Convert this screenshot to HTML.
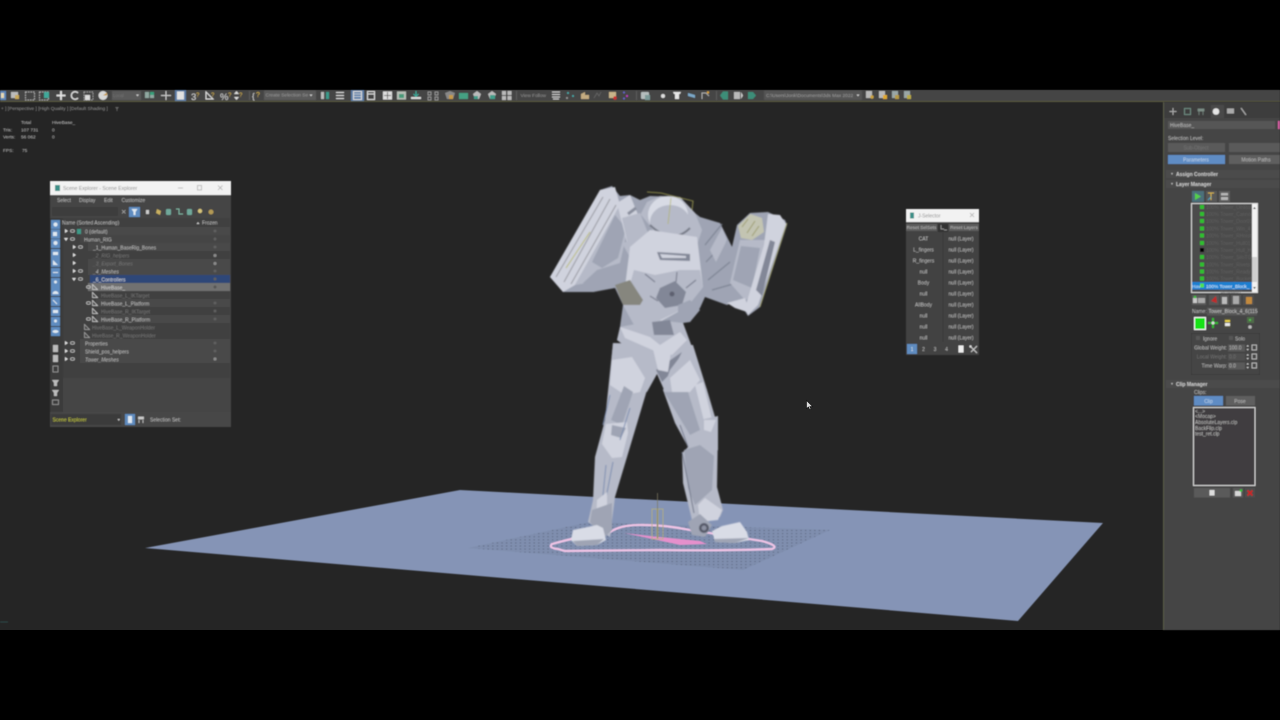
<!DOCTYPE html>
<html><head><meta charset="utf-8"><title>3ds Max</title>
<style>
html,body{margin:0;padding:0;background:#000;width:1280px;height:720px;overflow:hidden}
svg{display:block;position:absolute;left:0;top:0}
text{font-family:"Liberation Sans",sans-serif;font-size:5px;fill:#bdbdbd}
.d{fill:#7b7b7b}.b{font-weight:bold;fill:#cfcfcf}.k{fill:#747474}.w{fill:#d4d4d4}
.m{fill:#b6bac8}.n{fill:#9fa4b4}.o{fill:#828797}.l{fill:#d0d3de}.x{fill:#6e7280}
</style></head><body>
<svg width="1280" height="720" viewBox="0 0 1280 720" xmlns="http://www.w3.org/2000/svg">
<defs>
<filter id="s" x="-5%" y="-5%" width="110%" height="110%"><feGaussianBlur stdDeviation="0.45"/></filter>
<filter id="r" x="-5%" y="-5%" width="110%" height="110%"><feGaussianBlur stdDeviation="0.8"/></filter>
<filter id="p" x="-5%" y="-20%" width="110%" height="140%"><feGaussianBlur stdDeviation="0.6"/></filter>
<pattern id="dots" width="4.6" height="3.1" patternUnits="userSpaceOnUse"><rect width="1.2" height=".8" fill="#3f4658"/></pattern>
</defs>
<rect width="1280" height="720" fill="#000"/>
<rect y="90" width="1280" height="540" fill="#252525"/>
<g filter="url(#s)">
<!-- toolbar -->
<rect y="90" width="1280" height="11" fill="#454545"/>
<rect y="101" width="1280" height="1" fill="#5c5c3e"/>
<g>
<rect x="0" y="91" width="6" height="9" fill="#5d86b8"/><rect x="1" y="93" width="3" height="5" fill="#e8d9b0"/>
<rect x="11" y="92" width="7" height="6" fill="#bbb"/><rect x="15" y="95" width="4" height="4" fill="#c9a95a"/>
<rect x="25.5" y="92" width="9" height="8" fill="none" stroke="#aaa" stroke-width="1" stroke-dasharray="1.5 1"/>
<rect x="39.5" y="92" width="9" height="8" fill="none" stroke="#aaa" stroke-width="1" stroke-dasharray="1.5 1"/><rect x="44" y="92" width="5" height="6" fill="#3fa89a"/>
<path d="M61 91v9M56.5 95.500h9" stroke="#e5e5e5" stroke-width="1.800"/>
<path d="M78 93a3.800 3.800 0 1 0 0 5" fill="none" stroke="#ddd" stroke-width="1.400"/>
<rect x="84" y="92" width="9" height="8" fill="none" stroke="#999" stroke-dasharray="1.500 1"/><rect x="85" y="95" width="5" height="5" fill="#ddd"/>
<circle cx="103" cy="95.500" r="4.500" fill="#d8d8d8"/><path d="M103 95.500l4-3v3z" fill="#c79a4a"/>
<rect x="112" y="91" width="29" height="9" fill="#5a5a5a"/><text x="113" y="97" class="k" style="font-size:4.5px">Local</text><path d="M136 94.500h3l-1.500 2z" fill="#ccc"/>
<path d="M145 92h4v6h-4zM150 92h4v6h-4z" fill="#8fa7a0"/><rect x="150" y="92" width="4" height="3" fill="#39a07c"/>
<path d="M166 91v9M161 95.500h10" stroke="#ccc" stroke-width="1"/>
<rect x="175" y="90" width="11" height="11" fill="#5b7ea8"/><rect x="177" y="91.500" width="7" height="8" fill="#e2e2e2"/>
<text x="191" y="100" class="w" style="font-size:9.500px">3</text><text x="196" y="97" style="font-size:6px;fill:#d9b64d">?</text>
<path d="M206 92v7h7z" fill="none" stroke="#ddd" stroke-width="1"/><text x="211" y="97" style="font-size:6px;fill:#d9b64d">?</text>
<text x="220" y="100" class="w" style="font-size:9.500px">%</text><text x="228" y="97" style="font-size:6px;fill:#d9b64d">?</text>
<path d="M234 94l2.500-3 2.500 3zM234 97l2.500 3 2.500-3z" fill="#ddd"/><text x="239" y="97" style="font-size:6px;fill:#d9b64d">?</text>
<rect x="249" y="91" width="1" height="9" fill="#5c5c5c"/>
<text x="252" y="99" class="w" style="font-size:8px">{</text><text x="256" y="97" style="font-size:7px;fill:#d9b64d">?</text>
<rect x="264" y="90.500" width="52" height="9.500" fill="#5a5a5a"/><text x="265.500" y="96.500" class="d" style="font-size:4.800px;fill:#999">Create Selection Se</text><path d="M309.500 94.500h3l-1.500 2z" fill="#ccc"/>
<path d="M321 92h3v7h-3z" fill="#bbb"/><path d="M326 92h3v7h-3z" fill="#3a9a8a"/>
<path d="M336 92h8v1h-8zM336 95h8v1h-8zM336 98h8v1h-8z" fill="#ddd"/>
<rect x="351" y="90" width="13" height="11" fill="#5b7ea8"/><rect x="353.500" y="91.500" width="8" height="8" fill="none" stroke="#ddd"/><path d="M354 94h7M354 96.500h7" stroke="#ddd" stroke-width=".7"/>
<rect x="367.500" y="91.500" width="7" height="8" fill="none" stroke="#ddd"/><path d="M368 94h6" stroke="#ddd"/>
<rect x="383" y="91.500" width="9" height="8" fill="#ddd"/><path d="M387.500 92v7M384 95.500h7" stroke="#555" stroke-width=".8"/>
<rect x="397" y="91.500" width="9" height="8" fill="#b6bdb6"/><rect x="399" y="94" width="5" height="4" fill="#4a9a7a"/>
<path d="M411 97h10v2h-10z" fill="#ddd"/><path d="M416 91v5M413.500 94l2.500 2.500 2.500-2.500" stroke="#3bb0a0" fill="none"/>
<path d="M428 92h3v3h-3zM435 92h3v3h-3zM428 97h3v3h-3zM435 97h3v3h-3z" fill="none" stroke="#aaa" stroke-width=".7"/>
<path d="M445 93l5-2 5 2-2 6h-6z" fill="#888"/><rect x="449" y="95" width="4" height="4" fill="#c59a48"/>
<path d="M459 93h9v6h-9z" fill="#44a083"/>
<path d="M473 94l4-3 4 3-2 5h-4z" fill="#bbb"/><rect x="474" y="96" width="4" height="3" fill="#3f9e8a"/>
<path d="M488 94l4-3 4 3-2 5h-4z" fill="#bbb"/><rect x="490" y="95" width="5" height="4" fill="#3f9e8a"/>
<path d="M502 91h4v4h-4zM507.500 91h4v4h-4zM502 96h4v4h-4zM507.500 96h4v4h-4z" fill="#b9b9b9"/>
<rect x="516" y="91" width="1" height="9" fill="#5c5c5c"/>
<text x="520.500" y="97" class="d" style="font-size:4.800px;fill:#8f8f8f">View Follow</text>
<path d="M552 92h8M552 94.500h8M552 97h8M553 99h6" stroke="#ccc" stroke-width="1"/>
<circle cx="568" cy="93" r="1" fill="#4aa"/><circle cx="573" cy="96" r="1" fill="#4aa"/><circle cx="567" cy="98" r="1" fill="#999"/>
<path d="M581 94l4-2v7h-4zM585 95h4v4h-4z" fill="#c4ab80"/>
<path d="M594 98l3-5 2 3 2-4" fill="none" stroke="#666" stroke-width=".8"/>
<rect x="609" y="92" width="7" height="6" fill="#c9b48a"/><circle cx="615" cy="98" r="1.700" fill="#c33"/>
<circle cx="624" cy="92.500" r="1" fill="#66c"/><circle cx="627" cy="96" r="1" fill="#c3c"/><circle cx="624" cy="98.500" r="1" fill="#66c"/>
<rect x="636" y="91" width="1" height="9" fill="#5c5c5c"/>
<rect x="641" y="92" width="8" height="7" rx="1" fill="#b4bcbc"/><rect x="645" y="95" width="5" height="5" fill="#7b9a98"/>
<circle cx="663" cy="96" r="2" fill="#ddd"/>
<path d="M673 92h8l-1 2h-1v5h-4v-5h-1z" fill="#e5e5e5"/>
<path d="M688 93l7 2v3l-7-2z" fill="#7ba7c7"/>
<path d="M702 99v-6h4l3 3" fill="none" stroke="#aaa"/><circle cx="708" cy="92.500" r="1.200" fill="#d9a33a"/>
<rect x="716" y="91" width="1" height="9" fill="#5c5c5c"/>
<path d="M720 95.500l3-4h5v8h-5z" fill="#3e8d78"/>
<rect x="734" y="92" width="6" height="7" fill="#b9b9b9"/><path d="M741 92v7l2-3.500z" fill="#ccc"/>
<path d="M748 92h5l3 3.500-3 3.500h-5z" fill="#3e8d78"/>
<rect x="764" y="90.500" width="98" height="9.500" fill="#555"/><text x="766" y="96.800" style="font-size:4.800px;fill:#9c9c9c">C:\Users\Jonk\Documents\3ds Max 2022</text><path d="M856.500 94.500h3l-1.500 2z" fill="#ccc"/>
<rect x="866" y="91" width="6" height="7" fill="#b8b8b8"/><circle cx="872" cy="97" r="1.700" fill="#c9a23f"/>
<rect x="879" y="91" width="6" height="7" fill="#b8b8b8"/><rect x="883" y="95" width="4" height="4" fill="#e0a92e"/>
<rect x="892" y="91" width="6" height="7" fill="#9aa6a6"/><rect x="895" y="95" width="4" height="4" fill="#b59a45"/>
<rect x="904" y="91" width="6" height="7" fill="#9aa6a6"/><rect x="907" y="95" width="4" height="4" fill="#b8a944"/>
</g>
<!-- viewport label and stats -->
<text x="1" y="110" style="font-size:4.800px;fill:#9d9d9d">+ ] [Perspective ] [High Quality ] [Default Shading ]</text>
<path d="M115 107h4l-1.500 2v2h-1v-2z" fill="#666"/>
<text x="21" y="124" class="w" style="font-size:4.800px">Total</text><text x="52" y="124" class="w" style="font-size:4.800px">HiveBase_</text>
<text x="3" y="131.500" class="w" style="font-size:4.800px">Tris:</text><text x="21" y="131.500" class="w" style="font-size:4.800px">107 731</text><text x="52" y="131.500" class="w" style="font-size:4.800px">0</text>
<text x="3" y="138.500" class="w" style="font-size:4.800px">Verts:</text><text x="21" y="138.500" class="w" style="font-size:4.800px">56 062</text><text x="52" y="138.500" class="w" style="font-size:4.800px">0</text>
<text x="3" y="152" class="w" style="font-size:4.800px">FPS:</text><text x="22" y="152" class="w" style="font-size:4.800px">75</text>
</g>
<!-- floor -->
<g filter="url(#s)">
<polygon points="145,548 460,490 1103,523 1018,621" fill="#8594b6"/>
<polygon points="468,548 590,522 830,530 743,570" fill="#6f7c98" opacity=".25"/>
<polygon points="468,548 590,522 830,530 743,570" fill="url(#dots)" opacity=".7"/>
</g>
<g filter="url(#p)">
<path d="M558 549 Q548 548 552 544 Q580 536 610 532 Q622 524 645 525 Q665 525 690 530 L762 541 Q780 546 772 549 Q720 551 660 550 L565 551Z" fill="none" stroke="#eec3e4" stroke-width="2.400"/>
<path d="M624 533L650 536L700 541L707 544L680 545Z" fill="#e690cc"/>
<path d="M652 509h5v30h-5zM658 509h5v30h-5z" fill="none" stroke="#b7b27f" stroke-width="1" opacity=".8"/>
<path d="M657.500 493v45" stroke="#7c7a60" stroke-width=".7"/>
</g>
<!-- character -->
<g filter="url(#r)">
<!-- silhouette underlay -->
<polygon class="n" points="550,277 600,190 612,186 620,196 630,195 640,200 650,196 680,197 695,213 705,221 720,223 732,247 737,225 750,213 768,212 785,220 787,225 760,307 748,316 738,300 727,305 705,297 700,308 690,322 683,323 693,350 660,372 640,357 617,340 620,327 623,305 615,288 593,292 563,292"/>
<polygon class="m" points="613,343 693,345 707,390 665,392 657,374 647,392 609,388"/>
<!-- left shield -->
<polygon class="l" points="550,277 600,190 615,187 620,205 575,285 563,292"/>
<polygon class="m" points="575,285 620,205 628,227 620,263 587,283"/>
<polygon class="n" points="592,262 615,215 626,228 618,258 602,268"/>
<path d="M556 277L603 197M564 282L610 199M571 284L616 205" stroke="#95969e" stroke-width="1"/>
<path d="M566 268L590 232" stroke="#b5b552" stroke-width=".8"/>
<polygon class="n" points="583,283 597,270 620,263 633,267 617,287 593,292"/>
<!-- right arm -->
<polygon class="n" points="700,217 720,223 732,247 733,283 727,303 703,293 702,260"/>
<path d="M705 245L722 224M706 262L727 240M708 280L730 262M712 290L733 284" stroke="#7e8494" stroke-width="1.200"/>
<polygon class="m" points="710,250 722,228 727,240 716,262"/>
<!-- right forearm and shield -->
<polygon class="m" points="730,283 740,240 766,240 757,295 745,300"/>
<polygon class="n" points="733,280 741,246 760,248 752,288"/>
<polygon class="l" points="768,214 780,215 786,224 758,305 748,315 745,308 764,245"/>
<polygon class="o" points="756,290 770,240 775,242 762,296"/>
<polygon points="738,226 750,214 762,218 764,232 752,240 741,238" fill="#c3c4b2"/>
<path d="M742 227l6-8M747 233l8-12M752 236l7-10" stroke="#9c9c6c" stroke-width="1"/>
<path d="M787 223L760 307" stroke="#a6a560" stroke-width=".8"/>
<polygon class="l" points="727,303 745,298 750,313 735,308"/>
<!-- helmet hood -->
<polygon class="m" points="647,202 660,196 680,197 695,213 702,230 697,245 650,240 635,225"/>
<path d="M647 192L661 193L693 201L692 210" fill="none" stroke="#a8a654" stroke-width=".8"/>
<polygon class="n" points="637,210 660,238 655,245 630,225"/>
<ellipse cx="668" cy="215" rx="20" ry="19" fill="#d8dbe5"/>
<ellipse cx="670" cy="222" rx="20" ry="17" class="m"/>
<path d="M650 225Q672 246 690 228" fill="none" stroke="#777b88" stroke-width="2"/>
<path d="M671 198L668 224" stroke="#b2b25a" stroke-width=".7"/>
<!-- left shoulder -->
<polygon class="l" points="617,203 630,195 647,237 627,243"/>
<polygon class="m" points="622,218 640,213 650,238 628,245"/>
<path d="M636 208l-8 6" stroke="#8a8f9e" stroke-width="3"/>
<polygon class="m" points="622,243 634,240 645,263 636,268"/>
<!-- torso -->
<polygon class="l" points="630,247 650,230 697,237 703,287 687,307 650,327 623,303"/>
<polygon class="m" points="634,270 655,275 680,270 700,270 703,287 687,307 650,325 625,302"/>
<polygon class="o" points="657,252 690,254 690,261 660,260"/>
<polygon class="l" points="660,254 686,256 686,258 662,258"/>
<polygon class="o" points="660,288 675,281 686,292 682,305 665,308 656,298"/>
<circle cx="672" cy="294" r="2.500" fill="#5d6170"/>
<path d="M677 272l-1 10M655 282l-10-8M650 296l8 5M686 288l10-8" stroke="#7c8090" stroke-width="1.200"/>
<polygon points="615,285 630,280 643,300 640,305 623,305" fill="#86867e"/>
<polygon class="m" points="623,305 640,305 653,318 650,330 634,325"/>
<polygon class="n" points="678,305 690,300 700,310 690,322 678,320"/>
<!-- waist -->
<polygon class="m" points="617,340 620,327 657,320 683,323 693,350 680,362 660,372 640,357"/>
<polygon class="o" points="652,322 670,320 674,335 654,335"/>
<polygon class="l" points="620,327 650,337 660,345 657,352 625,338"/>
<polygon class="l" points="660,345 680,332 687,340 672,355 662,352"/>
<polygon class="o" points="656,370 682,352 672,372 662,382"/>
<polygon class="l" points="652,345 672,345 668,372 658,370"/>
<!-- left leg -->
<polygon class="m" points="613,343 605,420 595,457 593,500 588,522 610,537 615,497 627,457 647,390 648,367 638,357"/>
<polygon class="l" points="612,360 632,357 645,378 640,392 625,395 610,385"/>
<polygon class="n" points="624,386 633,392 622,425 611,420"/>
<polygon class="l" points="606,424 627,422 628,433 622,457 612,458 602,444"/>
<polygon class="n" points="612,425 626,428 621,438 611,435"/>
<path d="M610 395L603 425M630 408L620 440M606 465L602 505M613 462L606 498" stroke="#7b8db0" stroke-width="1"/>
<polygon class="l" points="597,500 607,492 607,515 596,522"/>
<polygon class="n" points="592,510 612,503 612,530 604,538 590,522"/>
<!-- right leg -->
<polygon class="m" points="663,390 675,423 688,447 682,453 683,483 692,520 720,517 723,510 717,487 718,427 707,390 693,357 683,353 670,370"/>
<polygon class="l" points="670,378 690,360 700,380 690,392 672,392"/>
<polygon class="n" points="664,392 688,392 700,430 690,435"/>
<polygon class="l" points="695,385 703,382 712,420 705,425"/>
<polygon class="m" points="700,420 718,416 718,450 712,456 700,440"/>
<polygon class="l" points="704,420 716,420 711,432 704,430"/>
<polygon class="n" points="684,450 700,445 714,456 712,490 695,505 688,488"/>
<path d="M682 452L694 513M680 425L688 447" stroke="#6e7587" stroke-width="1"/>
<polygon class="l" points="698,505 705,498 722,510 718,520 700,522"/>
<polygon class="n" points="688,522 700,514 712,525 705,537 692,535"/>
<!-- feet -->
<polygon points="573,530 597,525 603,528 606,540 597,545 577,546 571,540" fill="#d9dce6"/>
<polygon class="n" points="573,541 604,539 597,545 577,546"/>
<polygon points="712,531 722,526 740,522 747,532 749,540 735,543 715,542" fill="#d9dce6"/>
<polygon class="n" points="714,539 749,538 735,543 715,542"/>
<circle cx="704" cy="528" r="5" fill="#555968"/><circle cx="704" cy="528" r="2.500" fill="#8d92a3"/>
</g>
<!-- cursor -->
<path d="M806.500 400.500v8l2-1.500 1.200 2.800 1.300-.6-1.200-2.700 2.700-.1z" fill="#ddd" stroke="#111" stroke-width=".6"/>

<g filter="url(#s)">
<!-- Scene Explorer -->
<rect x="50" y="181" width="181" height="246" fill="#444"/>
<rect x="50" y="181" width="181" height="14" fill="#f2f2f2"/>
<rect x="55" y="185" width="5" height="6" fill="#3c8f88"/>
<text x="63" y="190" style="fill:#8f8f8f;font-size:5.100px">Scene Explorer - Scene Explorer</text>
<path d="M178 188h5" stroke="#aaa" stroke-width=".7"/><rect x="197.500" y="185.500" width="4" height="4.500" fill="none" stroke="#aaa" stroke-width=".7"/><path d="M218 185.500l4.500 4.500m0-4.500l-4.500 4.500" stroke="#aaa" stroke-width=".7"/>
<text x="57" y="202">Select</text><text x="79" y="202">Display</text><text x="104" y="202">Edit</text><text x="121.500" y="202">Customize</text>
<rect x="52" y="207" width="66" height="9" fill="#3c3c3c"/>
<path d="M122 210l3.500 3.500m0-3.500l-3.500 3.500" stroke="#aaa" stroke-width=".7"/>
<rect x="129" y="207" width="11" height="10" fill="#5f8cc0"/><path d="M131.500 209h6l-2 3v3h-2v-3z" fill="#dfe8f0"/>
<rect x="146" y="210" width="3" height="4" fill="#ccc"/><path d="M157 209l4 2-1 4-4-2z" fill="#c9b060"/>
<rect x="166" y="209" width="5" height="6" rx="1" fill="#6fa79a"/><path d="M176 209h3v5h4" fill="none" stroke="#7fb3a0"/>
<rect x="187" y="209" width="5" height="6" rx="1" fill="#6fa79a"/><circle cx="200" cy="211" r="2.200" fill="#d6c37a"/><circle cx="211" cy="212" r="2.500" fill="#b39a55"/>
<!-- left column -->
<rect x="50" y="218" width="13" height="208" fill="#3b3b3b"/>
<rect x="63" y="218" width="167" height="160" fill="#414141"/>
<g fill="#5f8cc0"><rect x="51" y="220" width="9" height="9"/><rect x="51" y="229.500" width="9" height="9"/><rect x="51" y="239" width="9" height="9"/><rect x="51" y="249" width="9" height="9"/><rect x="51" y="258" width="9" height="9"/><rect x="51" y="268" width="9" height="9"/><rect x="51" y="278" width="9" height="9"/><rect x="51" y="287" width="9" height="9"/><rect x="51" y="297" width="9" height="9"/><rect x="51" y="307" width="9" height="9"/><rect x="51" y="317" width="9" height="9"/><rect x="51" y="327" width="9" height="9"/></g>
<g fill="#dfe8f0"><circle cx="55.500" cy="224.500" r="2"/><rect x="53" y="232" width="4" height="4"/><circle cx="55.500" cy="243" r="2"/><rect x="53" y="252" width="5" height="3"/><path d="M53 265v-5l5 5z"/><rect x="53" y="272" width="5" height="1"/><circle cx="55.500" cy="282" r="1.500"/><path d="M52.500 294a3 3 0 0 1 6 0z"/><path d="M53 300l4 4" stroke="#dfe8f0"/><rect x="53" y="310" width="5" height="3"/><circle cx="55.500" cy="321" r="1.500"/><ellipse cx="55.500" cy="331.500" rx="3" ry="1.500"/></g>
<g fill="#bbb"><rect x="53" y="345" width="5" height="7"/><rect x="53" y="355" width="5" height="7"/><rect x="53" y="366" width="5" height="6" fill="none" stroke="#aaa" stroke-width=".7"/><path d="M52 380h7l-2 3v3h-3v-3z"/><path d="M52 390h7l-2 3v3h-3v-3z"/><rect x="52.500" y="400" width="6" height="4.500" fill="none" stroke="#aaa" stroke-width=".7"/></g>
<!-- header -->
<rect x="63" y="218" width="167" height="8" fill="#3f3f3f"/>
<text x="62" y="224.500">Name (Sorted Ascending)</text><path d="M196.500 224l1.500-2 1.500 2z" fill="#ccc"/><text x="202" y="224.500">Frozen</text>
<!-- rows -->
<rect x="80" y="227" width="150" height="8" fill="#4a4a4a"/>
<rect x="80" y="235" width="150" height="8" fill="#454545"/>
<rect x="88" y="243" width="142" height="8" fill="#4a4a4a"/>
<rect x="88" y="259" width="142" height="8" fill="#4a4a4a"/>
<rect x="88" y="267" width="142" height="8" fill="#4a4a4a"/>
<rect x="90" y="275" width="140" height="8" fill="#2f4678"/>
<rect x="88" y="283" width="142" height="8" fill="#717171"/>
<rect x="96" y="299" width="134" height="8" fill="#4a4a4a"/>
<rect x="96" y="315" width="134" height="8" fill="#4a4a4a"/>
<rect x="80" y="339" width="150" height="24" fill="#484848"/>
<g fill="#ddd">
<path d="M65 229l3 2-3 2zM65 341l3 2-3 2zM65 349l3 2-3 2zM65 357l3 2-3 2zM73 245l3 2-3 2zM73 253l3 2-3 2zM73 261l3 2-3 2zM73 269l3 2-3 2zM64 238l4 0-2 3zM72 278l4 0-2 3z"/>
</g>
<g fill="none" stroke="#cfcfcf" stroke-width=".7">
<ellipse cx="72.500" cy="231" rx="2" ry="1.300"/><ellipse cx="72.500" cy="239" rx="2" ry="1.300"/><ellipse cx="80.500" cy="247" rx="2" ry="1.300"/><ellipse cx="80.500" cy="271" rx="2" ry="1.300"/><ellipse cx="80.500" cy="279" rx="2" ry="1.300"/><ellipse cx="88.500" cy="287" rx="2" ry="1.300"/><ellipse cx="88.500" cy="303" rx="2" ry="1.300"/><ellipse cx="88.500" cy="319" rx="2" ry="1.300"/><ellipse cx="72.500" cy="343" rx="2" ry="1.300"/><ellipse cx="72.500" cy="351" rx="2" ry="1.300"/><ellipse cx="72.500" cy="359" rx="2" ry="1.300"/>
</g>
<rect x="77" y="229" width="4" height="5" fill="#3c9a88"/>
<g fill="none" stroke="#d5d5d5" stroke-width=".7"><path d="M92.500 284.500v5h5zM92.500 300.500v5h5zM92.500 316.500v5h5zM92.500 292.500v5h5zM92.500 308.500v5h5z"/><path d="M84.500 324.500v5h5zM84.500 332.500v5h5z" opacity=".7"/></g>
<text x="85" y="233.500">0 (default)</text>
<text x="84" y="241.500">Human_RIG</text>
<text x="93" y="249.500">_1_Human_BaseRig_Bones</text>
<text x="93" y="257.500" class="k" font-style="italic">_2_RIG_helpers</text>
<text x="93" y="265.500" class="k" font-style="italic">_3_Export_Bones</text>
<text x="93" y="273.500" font-style="italic">_4_Meshes</text>
<text x="93" y="281.500" style="fill:#e0e0e0">_6_Controllers</text>
<text x="101" y="289.500" class="w">HiveBase_</text>
<text x="101" y="297.500" class="k">HiveBase_L_IKTarget</text>
<text x="101" y="305.500">HiveBase_L_Platform</text>
<text x="101" y="313.500" class="k">HiveBase_R_IKTarget</text>
<text x="101" y="321.500">HiveBase_R_Platform</text>
<text x="92" y="329.500" class="k">HiveBase_L_WeaponHolder</text>
<text x="92" y="337.500" class="k">HiveBase_R_WeaponHolder</text>
<text x="85" y="345.500">Properties</text>
<text x="85" y="353.500">Shield_pos_helpers</text>
<text x="85" y="361.500" font-style="italic">Tower_Meshes</text>
<g fill="#5f5f5f"><circle cx="215" cy="231" r="1.500"/><circle cx="215" cy="239" r="1.500"/><circle cx="215" cy="247" r="1.500"/><circle cx="215" cy="255.500" r="1.600" fill="#8a8a8a"/><circle cx="215" cy="263.500" r="1.600" fill="#8a8a8a"/><circle cx="215" cy="271" r="1.500"/><circle cx="215" cy="279" r="1.500"/><circle cx="215" cy="287" r="1.500" fill="#555"/><circle cx="215" cy="303" r="1.500"/><circle cx="215" cy="311" r="1.500"/><circle cx="215" cy="319" r="1.500"/><circle cx="215" cy="343" r="1.500"/><circle cx="215" cy="351" r="1.500"/><circle cx="215" cy="359" r="1.600" fill="#8a8a8a"/></g>
<!-- bottom -->
<rect x="50" y="412" width="181" height="15" fill="#474747"/>
<rect x="51" y="414" width="70" height="11" fill="#3b3b3b"/>
<text x="52.500" y="421.500" style="fill:#c6c93a">Scene Explorer</text>
<path d="M117.500 419h2.500l-1.250 2z" fill="#ccc"/>
<rect x="125" y="414" width="10" height="11" fill="#5f8cc0"/><rect x="128" y="416" width="4" height="7" fill="#dfe8f0"/>
<path d="M138.500 417h5v2h-5zM139 420v3M143 420v3" stroke="#ccc" stroke-width=".8" fill="#ccc"/>
<text x="150" y="421.500">Selection Set:</text>
<!-- J-Selector -->
<rect x="906" y="209" width="73" height="146" fill="#434343"/>
<rect x="906" y="209" width="73" height="13" fill="#f2f2f2"/>
<rect x="910" y="212.500" width="4" height="6" fill="#3c8f88"/>
<text x="918" y="217.500" style="fill:#8f8f8f">J-Selector</text>
<path d="M970 213l4 4m0-4l-4 4" stroke="#aaa" stroke-width=".7"/>
<rect x="906" y="224" width="31" height="7" fill="#5b5b5b"/><rect x="949" y="224" width="30" height="7" fill="#5b5b5b"/><rect x="938" y="224" width="10" height="8" fill="#333"/>
<text x="921.500" y="229" text-anchor="middle" style="font-size:4.700px">Reset SelSets</text><text x="964" y="229" text-anchor="middle" style="font-size:4.700px">Reset Layers</text>
<path d="M941 225v4h3M944 230h3" stroke="#aaa" stroke-width=".7" fill="none"/>
<path d="M943 232v110" stroke="#383838" stroke-width=".7"/>
<g style="font-size:4.800px">
<text x="923.500" y="240.500" text-anchor="middle">CAT</text><text x="923.500" y="251.500" text-anchor="middle">L_fingers</text><text x="923.500" y="262.500" text-anchor="middle">R_fingers</text><text x="923.500" y="273.500" text-anchor="middle">null</text><text x="923.500" y="284.500" text-anchor="middle">Body</text><text x="923.500" y="295.500" text-anchor="middle">null</text><text x="923.500" y="306.500" text-anchor="middle">AllBody</text><text x="923.500" y="317.500" text-anchor="middle">null</text><text x="923.500" y="328.500" text-anchor="middle">null</text><text x="923.500" y="339.500" text-anchor="middle">null</text>
<text x="961" y="240.500" text-anchor="middle">null (Layer)</text><text x="961" y="251.500" text-anchor="middle">null (Layer)</text><text x="961" y="262.500" text-anchor="middle">null (Layer)</text><text x="961" y="273.500" text-anchor="middle">null (Layer)</text><text x="961" y="284.500" text-anchor="middle">null (Layer)</text><text x="961" y="295.500" text-anchor="middle">null (Layer)</text><text x="961" y="306.500" text-anchor="middle">null (Layer)</text><text x="961" y="317.500" text-anchor="middle">null (Layer)</text><text x="961" y="328.500" text-anchor="middle">null (Layer)</text><text x="961" y="339.500" text-anchor="middle">null (Layer)</text>
</g>
<rect x="907" y="344" width="10" height="10" fill="#5f8cc0"/>
<text x="912" y="351" text-anchor="middle" style="fill:#dfe8f0">1</text><text x="923.500" y="351" text-anchor="middle">2</text><text x="935" y="351" text-anchor="middle">3</text><text x="946.500" y="351" text-anchor="middle">4</text>
<rect x="958.500" y="345.500" width="5" height="7" fill="#eee"/>
<path d="M970 346l7 7M977 346l-6 6" stroke="#ccc" stroke-width="1"/><circle cx="970.500" cy="346.500" r="1.200" fill="#ddd"/>
<!-- Right panel -->
<rect x="1163" y="102" width="1" height="528" fill="#5c5f4a"/>
<rect x="1164" y="102" width="116" height="528" fill="#454545"/>
<rect x="1164" y="102" width="116" height="16" fill="#3d3d3d"/>
<rect x="1211" y="105" width="13" height="13" fill="#4a4a4a"/>
<path d="M1173 108v7M1169.500 111.500h7" stroke="#aaa"/><rect x="1184.500" y="108.500" width="6" height="6" fill="none" stroke="#6d8a80"/><path d="M1198 109h6v2h-6zM1199 111v4M1203 111v4" fill="#7d8f86" stroke="#7d8f86" stroke-width=".7"/>
<circle cx="1216" cy="111.500" r="3.300" fill="#e5e5e5"/><rect x="1227" y="108.500" width="7" height="5" fill="#aaa"/><path d="M1241 108l5 7" stroke="#aaa" stroke-width="1.200"/>
<rect x="1168" y="121" width="107" height="8" fill="#575757"/><text x="1170" y="127">HiveBase_</text><rect x="1278" y="121" width="2" height="8" fill="#d75fa5"/>
<text x="1168" y="140">Selection Level:</text>
<rect x="1168" y="143" width="57" height="9" fill="#5a5a5a"/><rect x="1229" y="143" width="51" height="9" fill="#5a5a5a"/><text x="1196" y="149.500" text-anchor="middle" class="k">Sub-Object</text>
<rect x="1168" y="155" width="57" height="9" fill="#5e8cc4"/><rect x="1229" y="155" width="51" height="9" fill="#5f5f5f"/><text x="1196" y="161.500" text-anchor="middle" style="fill:#c5d6ea">Parameters</text><text x="1256" y="161.500" text-anchor="middle">Motion Paths</text>
<rect x="1166" y="170" width="114" height="8" fill="#4c4c4c"/><text x="1176" y="175.800" class="b">Assign Controller</text><path d="M1171 173h2l-1 2z" fill="#bbb"/>
<rect x="1166" y="180" width="114" height="8" fill="#4c4c4c"/><text x="1176" y="185.800" class="b">Layer Manager</text><path d="M1171 183h2l-1 2z" fill="#bbb"/>
<rect x="1192" y="191" width="12" height="11" fill="#4b6f7a"/><path d="M1195 193l6 3.500-6 3.500z" fill="#55d04a"/>
<rect x="1206" y="191" width="11" height="11" fill="#585858"/><path d="M1208 193h6M1211 193v7" stroke="#d3b14b"/><path d="M1208 200l3-3" stroke="#4aa5c5"/>
<rect x="1219" y="191" width="11" height="11" fill="#5d5d5d"/><rect x="1221" y="193" width="7" height="7" fill="#b5b5b5"/><rect x="1221" y="195.500" width="7" height="1.500" fill="#555"/>
<!-- layer list -->
<rect x="1191" y="203" width="67" height="90" fill="#d8d8d8"/>
<rect x="1192" y="204" width="60" height="88" fill="#4b4b4b"/>
<g fill="#2fbf2f"><rect x="1200" y="205" width="4" height="4"/><rect x="1200" y="212" width="4" height="4"/><rect x="1200" y="219" width="4" height="4"/><rect x="1200" y="226.500" width="4" height="4"/><rect x="1200" y="233.500" width="4" height="4"/><rect x="1200" y="241" width="4" height="4"/><rect x="1200" y="248" width="4" height="4" fill="#000"/><rect x="1200" y="255" width="4" height="4"/><rect x="1200" y="262.500" width="4" height="4"/><rect x="1200" y="269.500" width="4" height="4"/><rect x="1200" y="276.500" width="4" height="4"/></g>
<g style="font-size:4.800px">
<text x="1206" y="209" style="fill:#5f5f5f">100% Tower_Uiniiss</text><text x="1206" y="216" style="fill:#5f5f5f">100% Tower_Cannon</text><text x="1206" y="223" style="fill:#5f5f5f">100% Tower_Door01</text><text x="1206" y="230.500" style="fill:#5f5f5f">100% Tower_Win_4</text><text x="1206" y="237.500" style="fill:#5f5f5f">100% Tower_RHoist</text><text x="1206" y="245" style="fill:#5f5f5f">100% Tower_Hull01</text><text x="1206" y="252" style="fill:#5f5f5f">100% Tower_Hull_H</text><text x="1206" y="259" style="fill:#5f5f5f">100% Tower_SiloTG</text><text x="1206" y="266.500" style="fill:#5f5f5f">100% Tower_Rivets</text><text x="1206" y="273.500" style="fill:#5f5f5f">100% Tower_Ready</text><text x="1206" y="280.500" style="fill:#5f5f5f">100% Tower_Bucket</text>
</g>
<rect x="1192" y="282" width="60" height="7.500" fill="#1a7fd0"/>
<rect x="1200" y="283.500" width="4" height="4" fill="#4fe04f"/>
<text x="1192" y="288" style="fill:#cfe8ff;font-size:4.800px">Hav</text><text x="1206" y="288" style="fill:#eaf5ff;font-size:4.800px">100% Tower_Block_</text>
<text x="1219" y="293" style="fill:#6a6a6a;font-size:4.300px">"Simulation"</text>
<rect x="1252" y="204" width="5" height="88" fill="#f2f2f2"/><rect x="1252" y="257" width="5" height="25" fill="#cfcfcf"/>
<path d="M1253 209l1.500-2 1.500 2zM1253 287l1.500 2 1.500-2z" fill="#444"/>
<!-- icon row -->
<rect x="1192" y="295" width="14" height="10" fill="#5a5a5a"/><rect x="1193" y="298" width="4" height="5" fill="#c9c9c9"/><circle cx="1195" cy="297" r="1.300" fill="#3fbf3f"/><rect x="1198" y="298" width="7" height="5" fill="#aaa"/>
<rect x="1209" y="295" width="10" height="10" fill="#575757"/><path d="M1211 301l5-5 1 7z" fill="#c02a2a"/>
<rect x="1220" y="295" width="9" height="10" fill="#595959"/><rect x="1222" y="297" width="5" height="7" fill="#bbb"/>
<rect x="1231" y="295" width="10" height="10" fill="#595959"/><rect x="1233" y="296" width="6" height="8" fill="#aaa"/>
<rect x="1243" y="295" width="11" height="10" fill="#4f4f4f"/><rect x="1246" y="297" width="6" height="7" fill="#c28a3c"/>
<text x="1192" y="313">Name:</text><rect x="1207" y="307.500" width="50" height="8" fill="#565656"/><text x="1208.500" y="313" style="fill:#cbcbcb">Tower_Block_4_6(115</text>
<rect x="1194" y="317" width="12" height="13" fill="#fff"/><rect x="1195" y="318" width="10" height="11" fill="#14e214"/>
<path d="M1213 318v10M1208 323h10" stroke="#2fb82f" stroke-width="2"/><circle cx="1213" cy="323" r="1.500" fill="#ddd"/>
<rect x="1224" y="318" width="7" height="10" fill="#514f3f"/><rect x="1225" y="320" width="5" height="2" fill="#e9d34a"/><rect x="1225" y="323" width="5" height="3" fill="#e9e9e9"/>
<rect x="1247" y="317" width="7" height="6" fill="#4f6b4a"/><circle cx="1250" cy="320" r="1" fill="#4fd04f"/><circle cx="1250" cy="327" r="1.800" fill="#bbb"/>
<rect x="1191.500" y="333.500" width="68" height="41" fill="none" stroke="#3b3b3b"/>
<rect x="1196" y="336" width="4" height="4" fill="#565656"/><text x="1203" y="340.500">Ignore</text><rect x="1229" y="336" width="4" height="4" fill="#565656"/><text x="1235" y="340.500">Solo</text>
<text x="1227" y="349.500" text-anchor="end">Global Weight:</text><rect x="1228" y="344.500" width="17" height="7" fill="#5a5a5a"/><text x="1229" y="349.500">100.0</text>
<text x="1227" y="358.500" text-anchor="end" class="k">Local Weight:</text><rect x="1228" y="353.500" width="17" height="7" fill="#4f4f4f"/><text x="1229" y="358.500" class="k">0.0</text>
<text x="1227" y="367.500" text-anchor="end">Time Warp:</text><rect x="1228" y="362.500" width="17" height="7" fill="#5a5a5a"/><text x="1229" y="367.500">0.0</text>
<path d="M1246.500 346.500l1.200-1.500 1.200 1.500zM1246.500 349l1.200 1.500 1.200-1.500zM1246.500 355.500l1.200-1.500 1.200 1.500zM1246.500 358l1.200 1.500 1.200-1.500zM1246.500 364.500l1.200-1.500 1.200 1.500zM1246.500 367l1.200 1.500 1.200-1.500z" fill="#ddd"/>
<g fill="none" stroke="#ccc" stroke-width=".8"><rect x="1252" y="345" width="4.500" height="5"/><rect x="1252" y="354" width="4.500" height="5"/><rect x="1252" y="363" width="4.500" height="5"/></g>
<rect x="1166" y="380" width="114" height="8" fill="#4c4c4c"/><text x="1176" y="386" class="b">Clip Manager</text><path d="M1171 383h2l-1 2z" fill="#bbb"/>
<text x="1194" y="394">Clips:</text>
<rect x="1194" y="396" width="29" height="9.500" fill="#5e8cc4"/><text x="1208.500" y="403" text-anchor="middle" style="fill:#c5d6ea">Clip</text>
<rect x="1226" y="396" width="29" height="9.500" fill="#5f5f5f"/><text x="1240" y="403" text-anchor="middle">Pose</text>
<rect x="1193.500" y="407.500" width="61.500" height="78" fill="#403e3f" stroke="#d8d8d8" stroke-width="1"/>
<text x="1195" y="413">&lt;...&gt;</text><text x="1195" y="418">&lt;Mocap&gt;</text><text x="1195" y="424">AbsoluteLayers.clp</text><text x="1195" y="430">BackFlip.clp</text><text x="1195" y="435.500">test_ret.clp</text>
<rect x="1194" y="488" width="36" height="9.500" fill="#5a5a5a"/><rect x="1209.500" y="490" width="5" height="5.500" fill="#ddd"/>
<rect x="1233" y="488" width="10" height="9.500" fill="#5a5a5a"/><rect x="1235" y="491" width="6" height="5" fill="#d6d6d6"/><circle cx="1241" cy="490.500" r="1.300" fill="#35c535"/>
<rect x="1245" y="488" width="10" height="9.500" fill="#4e4e4e"/><path d="M1247.500 490.500l5 5m0-5l-5 5" stroke="#cf2323" stroke-width="1.600"/>
<path d="M0 622h8" stroke="#2d4a4a" stroke-width="1"/>
</g>
</svg>
</body></html>
